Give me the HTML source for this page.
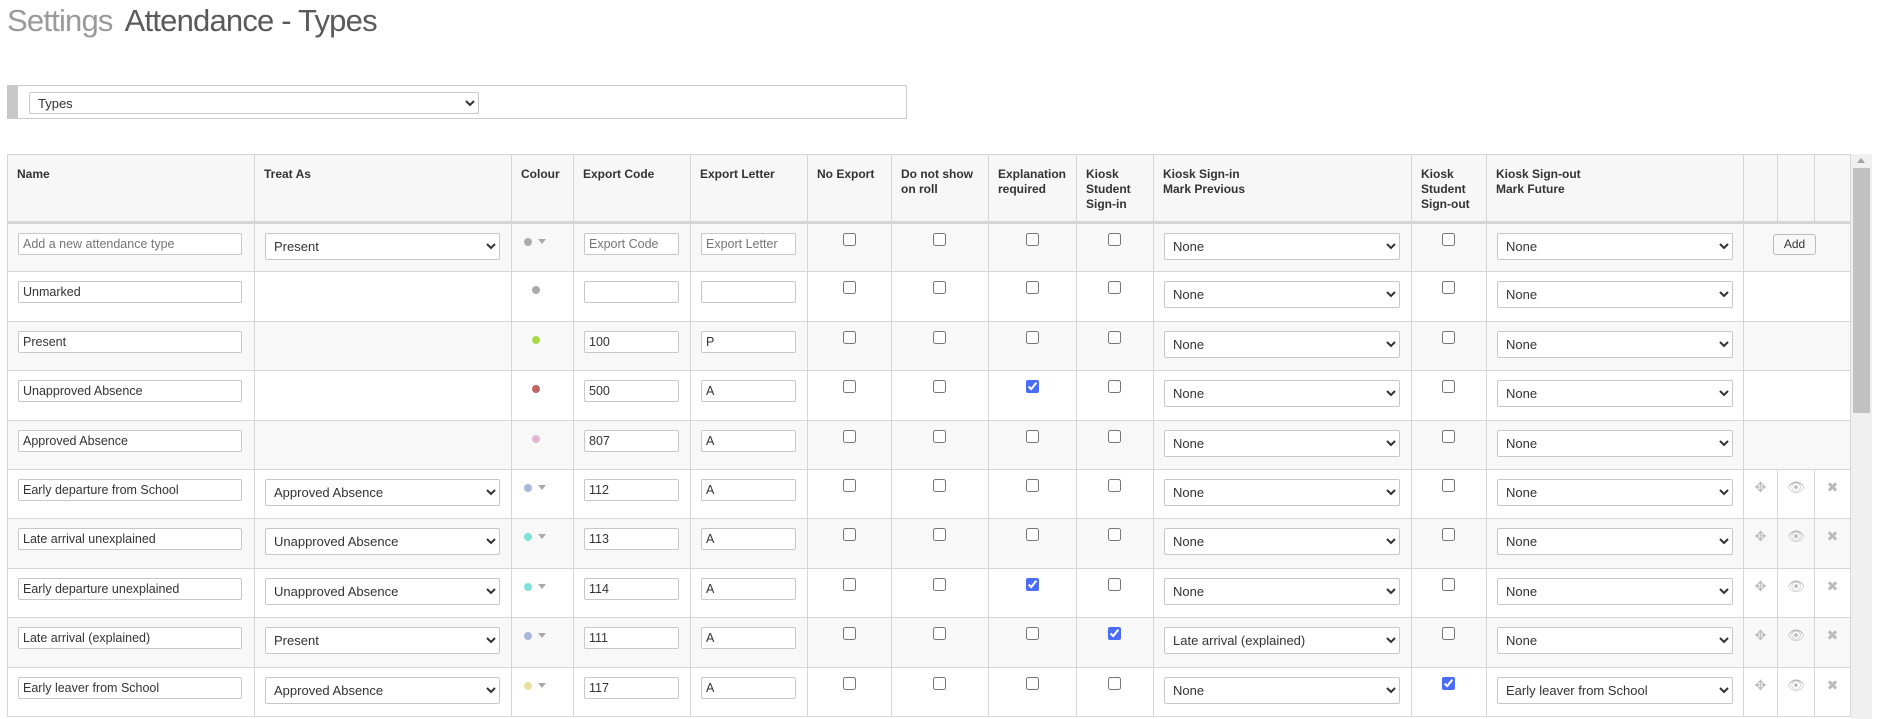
<!DOCTYPE html>
<html><head><meta charset="utf-8"><style>
*{box-sizing:border-box}
body{margin:0;width:1901px;height:719px;overflow:hidden;background:#fff;font-family:"Liberation Sans",sans-serif;color:#333;position:relative}
.t{position:absolute;left:7px;top:3px;font-size:31px;letter-spacing:-0.8px;white-space:nowrap;font-weight:300}
.t .a{color:#9a9a9a}.t .b{color:#5a5a5a;margin-left:12px}
.bar{position:absolute;left:7px;top:85px;width:900px;height:34px;border:1px solid #ccc;border-left:11px solid #c8c8c8}
select{font-family:"Liberation Sans",sans-serif;font-size:13px;color:#333;border:1px solid #c8c8c8;border-radius:2px;background:#fff;padding:0 4px}
.bar select{position:absolute;left:11px;top:6px;width:450px;height:22px;font-size:13px}
table{position:absolute;left:7px;top:154px;border-collapse:collapse;table-layout:fixed;width:1843px}
th,td{border:1px solid #d6d6d6;vertical-align:top;padding:0}
th{background:#f7f7f7;height:68px;text-align:left;font-size:12px;font-weight:bold;padding:12px 9px 0;line-height:15px;color:#333;border-bottom:3px solid #d6d6d6}
td{height:49.4px;position:relative}
tr:nth-child(even) td{background:#f8f8f8}
td input[type=text]{position:absolute;left:10px;top:9px;height:22px;border:1px solid #c8c8c8;border-radius:2px;font-family:"Liberation Sans",sans-serif;font-size:12.5px;padding:0 4px;color:#333;background:#fff}
td.n input{width:224px}
td.c input{width:95px}
td select{position:absolute;left:10px;top:9px;height:27px;width:235px}
td.k select{width:236px}
input[type=checkbox]{position:absolute;left:50%;margin:0 0 0 -7px;top:9px;width:13px;height:13px;accent-color:#4a6cf7}
.dot{position:absolute;left:20px;top:14px;width:8px;height:8px;border-radius:50%}
.ar{position:absolute;left:35px;top:15px;width:0;height:0;border-left:4px solid transparent;border-right:4px solid transparent;border-top:5px solid #aaa}
.btn{position:absolute;left:29px;top:10px;width:43px;height:21px;border:1px solid #bbb;border-radius:3px;background:#f8f8f8;font-size:12px;text-align:center;line-height:19px}
.ic{position:absolute;left:0;right:0;top:9px;text-align:center;color:#bbb;font-size:14px}
.sb{position:absolute;left:1851px;top:154px;width:21px;height:565px;background:#f0f0f0}
.sb div{position:absolute;left:2px;top:14px;width:17px;height:245px;background:#c1c1c1}
.sb span{position:absolute;left:6px;top:4px;border-left:4px solid transparent;border-right:4px solid transparent;border-bottom:5px solid #a3a3a3}
</style></head><body>
<div class="t"><span class="a">Settings</span><span class="b">Attendance - Types</span></div>
<div class="bar"><select><option>Types</option></select></div>
<table>
<colgroup><col style="width:247px"><col style="width:257px"><col style="width:62px"><col style="width:117px"><col style="width:117px"><col style="width:84px"><col style="width:97px"><col style="width:88px"><col style="width:77px"><col style="width:258px"><col style="width:75px"><col style="width:257px"><col style="width:34px"><col style="width:37px"><col style="width:36px"></colgroup>
<tr><th>Name</th><th>Treat As</th><th>Colour</th><th>Export Code</th><th>Export Letter</th><th>No Export</th><th>Do not show on roll</th><th>Explanation required</th><th>Kiosk Student Sign-in</th><th>Kiosk Sign-in<br>Mark Previous</th><th>Kiosk Student Sign-out</th><th>Kiosk Sign-out<br>Mark Future</th><th></th><th></th><th></th></tr>
<tr><td class="n"><input type="text" placeholder="Add a new attendance type"></td><td><select><option>Present</option></select></td><td><span class="dot" style="background:#aaa;left:12px"></span><span class="ar" style="left:26px"></span></td><td class="c"><input type="text" placeholder="Export Code"></td><td class="c"><input type="text" placeholder="Export Letter"></td><td><input type="checkbox"></td><td><input type="checkbox"></td><td><input type="checkbox"></td><td><input type="checkbox"></td><td class="k"><select><option>None</option></select></td><td><input type="checkbox"></td><td class="k"><select><option>None</option></select></td><td colspan="3"><div class="btn">Add</div></td></tr>
<tr><td class="n"><input type="text" value="Unmarked"></td><td></td><td><span class="dot" style="background:#aaa"></span></td><td class="c"><input type="text"></td><td class="c"><input type="text"></td><td><input type="checkbox"></td><td><input type="checkbox"></td><td><input type="checkbox"></td><td><input type="checkbox"></td><td class="k"><select><option>None</option></select></td><td><input type="checkbox"></td><td class="k"><select><option>None</option></select></td><td colspan="3"></td></tr>
<tr><td class="n"><input type="text" value="Present"></td><td></td><td><span class="dot" style="background:#a8d84a"></span></td><td class="c"><input type="text" value="100"></td><td class="c"><input type="text" value="P"></td><td><input type="checkbox"></td><td><input type="checkbox"></td><td><input type="checkbox"></td><td><input type="checkbox"></td><td class="k"><select><option>None</option></select></td><td><input type="checkbox"></td><td class="k"><select><option>None</option></select></td><td colspan="3"></td></tr>
<tr><td class="n"><input type="text" value="Unapproved Absence"></td><td></td><td><span class="dot" style="background:#c06464"></span></td><td class="c"><input type="text" value="500"></td><td class="c"><input type="text" value="A"></td><td><input type="checkbox"></td><td><input type="checkbox"></td><td><input type="checkbox" checked></td><td><input type="checkbox"></td><td class="k"><select><option>None</option></select></td><td><input type="checkbox"></td><td class="k"><select><option>None</option></select></td><td colspan="3"></td></tr>
<tr><td class="n"><input type="text" value="Approved Absence"></td><td></td><td><span class="dot" style="background:#e4b4d4"></span></td><td class="c"><input type="text" value="807"></td><td class="c"><input type="text" value="A"></td><td><input type="checkbox"></td><td><input type="checkbox"></td><td><input type="checkbox"></td><td><input type="checkbox"></td><td class="k"><select><option>None</option></select></td><td><input type="checkbox"></td><td class="k"><select><option>None</option></select></td><td colspan="3"></td></tr>
<tr><td class="n"><input type="text" value="Early departure from School"></td><td><select><option>Approved Absence</option></select></td><td><span class="dot" style="background:#a9b8d8;left:12px"></span><span class="ar" style="left:26px"></span></td><td class="c"><input type="text" value="112"></td><td class="c"><input type="text" value="A"></td><td><input type="checkbox"></td><td><input type="checkbox"></td><td><input type="checkbox"></td><td><input type="checkbox"></td><td class="k"><select><option>None</option></select></td><td><input type="checkbox"></td><td class="k"><select><option>None</option></select></td><td><div class="ic">✥</div></td><td><div class="ic">👁</div></td><td><div class="ic">✖</div></td></tr>
<tr><td class="n"><input type="text" value="Late arrival unexplained"></td><td><select><option>Unapproved Absence</option></select></td><td><span class="dot" style="background:#7ee0d6;left:12px"></span><span class="ar" style="left:26px"></span></td><td class="c"><input type="text" value="113"></td><td class="c"><input type="text" value="A"></td><td><input type="checkbox"></td><td><input type="checkbox"></td><td><input type="checkbox"></td><td><input type="checkbox"></td><td class="k"><select><option>None</option></select></td><td><input type="checkbox"></td><td class="k"><select><option>None</option></select></td><td><div class="ic">✥</div></td><td><div class="ic">👁</div></td><td><div class="ic">✖</div></td></tr>
<tr><td class="n"><input type="text" value="Early departure unexplained"></td><td><select><option>Unapproved Absence</option></select></td><td><span class="dot" style="background:#7ee0d6;left:12px"></span><span class="ar" style="left:26px"></span></td><td class="c"><input type="text" value="114"></td><td class="c"><input type="text" value="A"></td><td><input type="checkbox"></td><td><input type="checkbox"></td><td><input type="checkbox" checked></td><td><input type="checkbox"></td><td class="k"><select><option>None</option></select></td><td><input type="checkbox"></td><td class="k"><select><option>None</option></select></td><td><div class="ic">✥</div></td><td><div class="ic">👁</div></td><td><div class="ic">✖</div></td></tr>
<tr><td class="n"><input type="text" value="Late arrival (explained)"></td><td><select><option>Present</option></select></td><td><span class="dot" style="background:#a9b8d8;left:12px"></span><span class="ar" style="left:26px"></span></td><td class="c"><input type="text" value="111"></td><td class="c"><input type="text" value="A"></td><td><input type="checkbox"></td><td><input type="checkbox"></td><td><input type="checkbox"></td><td><input type="checkbox" checked></td><td class="k"><select><option>Late arrival (explained)</option></select></td><td><input type="checkbox"></td><td class="k"><select><option>None</option></select></td><td><div class="ic">✥</div></td><td><div class="ic">👁</div></td><td><div class="ic">✖</div></td></tr>
<tr><td class="n"><input type="text" value="Early leaver from School"></td><td><select><option>Approved Absence</option></select></td><td><span class="dot" style="background:#e8e0a0;left:12px"></span><span class="ar" style="left:26px"></span></td><td class="c"><input type="text" value="117"></td><td class="c"><input type="text" value="A"></td><td><input type="checkbox"></td><td><input type="checkbox"></td><td><input type="checkbox"></td><td><input type="checkbox"></td><td class="k"><select><option>None</option></select></td><td><input type="checkbox" checked></td><td class="k"><select><option>Early leaver from School</option></select></td><td><div class="ic">✥</div></td><td><div class="ic">👁</div></td><td><div class="ic">✖</div></td></tr>
</table>
<div class="sb"><span></span><div></div></div>
</body></html>
